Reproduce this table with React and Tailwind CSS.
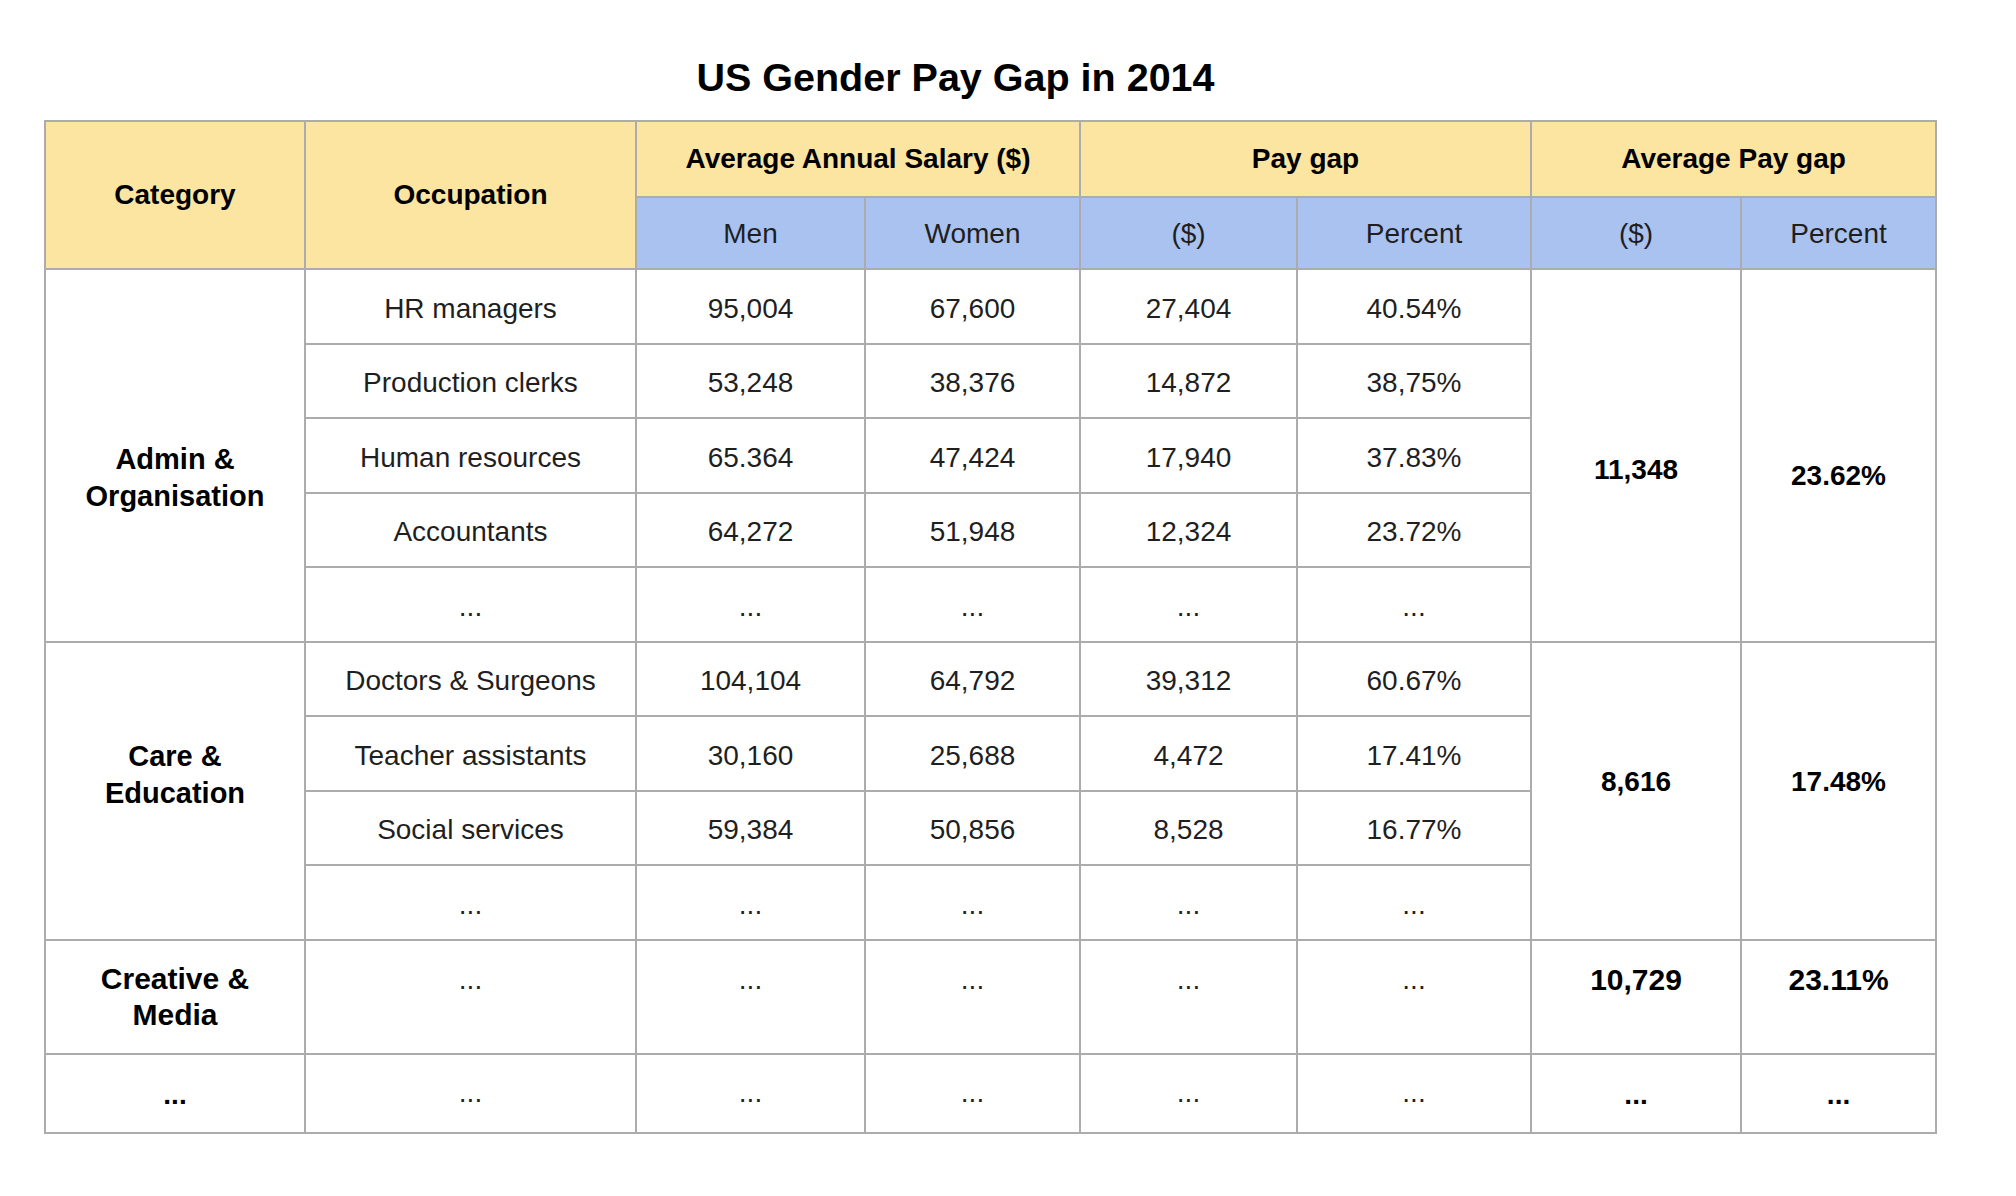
import React from "react";

const adminRows = [
  ["HR managers", "95,004", "67,600", "27,404", "40.54%"],
  ["Production clerks", "53,248", "38,376", "14,872", "38,75%"],
  ["Human resources", "65.364", "47,424", "17,940", "37.83%"],
  ["Accountants", "64,272", "51,948", "12,324", "23.72%"],
  ["...", "...", "...", "...", "..."],
];

const careRows = [
  ["Doctors & Surgeons", "104,104", "64,792", "39,312", "60.67%"],
  ["Teacher assistants", "30,160", "25,688", "4,472", "17.41%"],
  ["Social services", "59,384", "50,856", "8,528", "16.77%"],
  ["...", "...", "...", "...", "..."],
];

const cell = "border-2 border-[#acacac] text-center align-middle p-0";
const bodyText = "text-[28px] text-[#1f1f1f] leading-[32px]";
const catText = "text-[29px] font-bold leading-[37px] text-black";
const avgText = "text-[28px] font-bold leading-[32px] text-black";

const DataCells = ({ row }) =>
  row.map((v, i) => (
    <td key={i} className={`${cell} ${bodyText} pt-[5px]`}>
      {v}
    </td>
  ));

export default function App() {
  return (
    <div className="min-h-[1196px] bg-white pl-[44px] pt-[54px] font-['Liberation_Sans',Arial,sans-serif]">
      {/* Title */}
      <div className="w-[1891px] pr-[68px] text-center text-[39.5px] font-bold leading-[46px] text-black">
        US Gender Pay Gap in 2014
      </div>

      <table className="mt-[20px] w-[1891px] table-fixed border-collapse">
        <colgroup>
          <col className="w-[260px]" />
          <col className="w-[331px]" />
          <col className="w-[229px]" />
          <col className="w-[215px]" />
          <col className="w-[217px]" />
          <col className="w-[234px]" />
          <col className="w-[210px]" />
          <col className="w-[195px]" />
        </colgroup>
        <thead>
          <tr className="h-[76px] bg-[#fbe5a1]">
            <th rowSpan={2} className={`${cell} ${avgText}`}>
              Category
            </th>
            <th rowSpan={2} className={`${cell} ${avgText}`}>
              Occupation
            </th>
            <th colSpan={2} className={`${cell} ${avgText}`}>
              Average Annual Salary ($)
            </th>
            <th colSpan={2} className={`${cell} ${avgText}`}>
              Pay gap
            </th>
            <th colSpan={2} className={`${cell} ${avgText}`}>
              Average Pay gap
            </th>
          </tr>
          <tr className="h-[72px] bg-[#a9c2f0]">
            {["Men", "Women", "($)", "Percent", "($)", "Percent"].map((h, i) => (
              <th key={i} className={`${cell} pt-[2px] text-[28px] font-normal leading-[32px] text-[#1f1f1f]`}>
                {h}
              </th>
            ))}
          </tr>
        </thead>
        <tbody>
          {adminRows.map((row, i) => (
            <tr key={`a${i}`} className="h-[74.5px]">
              {i === 0 && (
                <td rowSpan={5} className={`${cell} ${catText} pt-[45px]`}>
                  Admin &amp;
                  <br />
                  Organisation
                </td>
              )}
              <DataCells row={row} />
              {i === 0 && (
                <>
                  <td rowSpan={5} className={`${cell} ${avgText} pt-[30px]`}>
                    11,348
                  </td>
                  <td rowSpan={5} className={`${cell} ${avgText} pt-[42px]`}>
                    23.62%
                  </td>
                </>
              )}
            </tr>
          ))}

          {careRows.map((row, i) => (
            <tr key={`c${i}`} className="h-[74.5px]">
              {i === 0 && (
                <td rowSpan={4} className={`${cell} ${catText} pb-[31px]`}>
                  Care &amp;
                  <br />
                  Education
                </td>
              )}
              <DataCells row={row} />
              {i === 0 && (
                <>
                  <td rowSpan={4} className={`${cell} ${avgText} pb-[17px]`}>
                    8,616
                  </td>
                  <td rowSpan={4} className={`${cell} ${avgText} pb-[17px]`}>
                    17.48%
                  </td>
                </>
              )}
            </tr>
          ))}

          {/* Creative & Media */}
          <tr className="h-[114px]">
            <td className={`${cell} text-[30px] font-bold leading-[36px] text-black`}>
              Creative &amp;
              <br />
              Media
            </td>
            {["...", "...", "...", "...", "..."].map((v, i) => (
              <td key={i} className={`${cell} ${bodyText} !align-top pt-[23px]`}>
                {v}
              </td>
            ))}
            <td className={`${cell} !align-top pt-[22px] text-[30px] font-bold leading-[34px] text-black`}>
              10,729
            </td>
            <td className={`${cell} !align-top pt-[22px] text-[30px] font-bold leading-[34px] text-black`}>
              23.11%
            </td>
          </tr>

          {/* More */}
          <tr className="h-[79px]">
            <td className={`${cell} ${avgText} pt-[3px]`}>...</td>
            {["...", "...", "...", "...", "..."].map((v, i) => (
              <td key={i} className={`${cell} ${bodyText}`}>
                {v}
              </td>
            ))}
            <td className={`${cell} ${avgText} pt-[3px]`}>...</td>
            <td className={`${cell} ${avgText} pt-[3px]`}>...</td>
          </tr>
        </tbody>
      </table>
    </div>
  );
}
